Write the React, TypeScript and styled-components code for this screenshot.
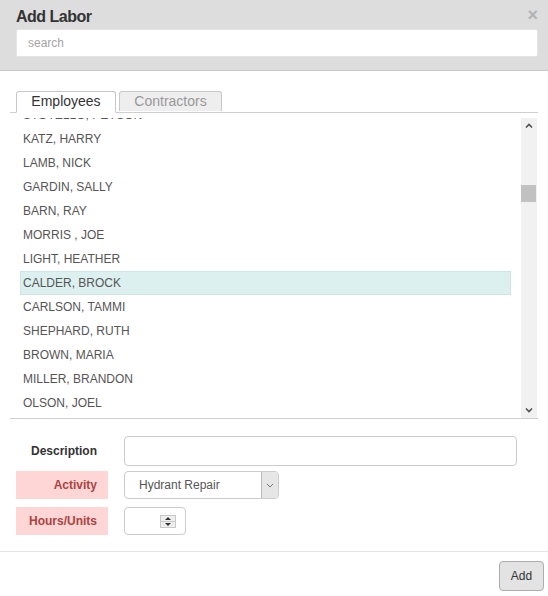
import React from "react";
import styled, { createGlobalStyle } from "styled-components";

const GlobalStyle = createGlobalStyle`
  html, body {
    margin: 0;
    padding: 0;
    background: #fff;
  }
  body {
    font-family: "Liberation Sans", Arial, sans-serif;
    color: #333;
  }
`;

const ROW_HEIGHT = 24;
const VIEWPORT_HEIGHT = 300;
const ARROW_SIZE = 16;

const visibleNames = [
  "STOTELLO, PEYSON",
  "KATZ, HARRY",
  "LAMB, NICK",
  "GARDIN, SALLY",
  "BARN, RAY",
  "MORRIS , JOE",
  "LIGHT, HEATHER",
  "CALDER, BROCK",
  "CARLSON, TAMMI",
  "SHEPHARD, RUTH",
  "BROWN, MARIA",
  "MILLER, BRANDON",
  "OLSON, JOEL",
  "PETERS, DANA",
];

const lastNames = [
  "ADAMS", "BAKER", "CLARK", "DAVIS", "EVANS", "FOSTER", "GRANT", "HAYES",
  "IVERSON", "JONES", "KELLER", "LARSON", "MASON", "NELSON", "OWENS", "PRICE",
  "QUINN", "REED", "STONE", "TURNER", "UNDERWOOD", "VANCE", "WALSH", "YOUNG",
];
const firstNames = [
  "AMY", "BEN", "CARL", "DIANE", "ERIC", "FRAN", "GARY", "HOLLY", "IAN",
  "JANE", "KYLE", "LISA", "MARK", "NORA", "OSCAR", "PAM", "RICK", "SUE",
];

const BEFORE = 40;
const TOTAL = 212;

const filler = (i: number) =>
  `${lastNames[(i * 7) % lastNames.length]}, ${firstNames[(i * 5) % firstNames.length]}`;

const employees: string[] = [
  ...Array.from({ length: BEFORE }, (_, i) => filler(i)),
  ...visibleNames,
  ...Array.from({ length: TOTAL - BEFORE - visibleNames.length }, (_, i) => filler(i + 100)),
];

const Modal = styled.div`
  width: 548px;
  height: 596px;
  background: #fff;
  display: flex;
  flex-direction: column;
  overflow: hidden;
`;

const Header = styled.div`
  background: #dddddd;
  border-bottom: 1px solid #c6c6c6;
  padding: 6px 10px 13px 16px;
  height: 71px;
  box-sizing: border-box;
`;

const TitleRow = styled.div`
  display: flex;
  align-items: flex-start;
  justify-content: space-between;
  height: 23px;
`;

const Title = styled.h4`
  margin: 0;
  font-size: 16px;
  font-weight: bold;
  letter-spacing: -0.5px;
  line-height: 22px;
  color: #333;
`;

const Close = styled.span`
  font-size: 18px;
  font-weight: bold;
  line-height: 18px;
  color: #b3b3b3;
`;

const SearchInput = styled.input`
  display: block;
  width: 522px;
  height: 28px;
  box-sizing: border-box;
  border: 1px solid #e4e4e4;
  border-radius: 2px;
  padding: 0 11px;
  font-family: "Liberation Sans", Arial, sans-serif;
  font-size: 12px;
  color: #555;
  background: #fff;
  outline: none;
  &::placeholder {
    color: #a5a5a5;
  }
`;

const Body = styled.div`
  padding: 20px 10px 0;
`;

const TabNav = styled.div`
  display: flex;
  gap: 3px;
  padding-left: 6px;
  border-bottom: 1px solid #cfcfcf;
  height: 21px;
`;

const Tab = styled.div<{ active?: boolean }>`
  width: ${p => (p.active ? 100 : 103)}px;
  height: ${p => (p.active ? 22 : 20)}px;
  box-sizing: border-box;
  border: 1px solid #c8c8c8;
  border-bottom: ${p => (p.active ? "1px solid #fff" : "none")};
  border-radius: 3px 3px 0 0;
  background: ${p => (p.active ? "#fff" : "#eeeeee")};
  color: ${p => (p.active ? "#333" : "#999")};
  font-size: 14px;
  line-height: 19px;
  text-align: center;
`;

const ListPanel = styled.div`
  display: flex;
  margin-top: 5px;
  border-bottom: 1px solid #cfcfcf;
  height: ${VIEWPORT_HEIGHT}px;
`;

const Viewport = styled.div`
  flex: 1;
  overflow: hidden;
  padding: 0 10px;
`;

const Rows = styled.div``;

const Row = styled.div<{ selected?: boolean }>`
  height: ${ROW_HEIGHT}px;
  box-sizing: border-box;
  line-height: 22px;
  padding-left: 2px;
  font-size: 12px;
  color: #555;
  white-space: nowrap;
  border: 1px solid ${p => (p.selected ? "#cfe5e5" : "transparent")};
  background: ${p => (p.selected ? "#ddf0f0" : "transparent")};
`;

const Scrollbar = styled.div`
  width: 16px;
  margin-right: 1px;
  background: #f1f1f1;
  display: flex;
  flex-direction: column;
`;

const ScrollArrow = styled.div`
  height: ${ARROW_SIZE}px;
  display: flex;
  align-items: center;
  justify-content: center;
`;

const ScrollTrack = styled.div`
  flex: 1;
`;

const Thumb = styled.div`
  background: #c1c1c1;
  margin-right: 1px;
`;

const Form = styled.div`
  padding: 17px 0 0 6px;
`;

const FormRow = styled.div<{ gap: number }>`
  display: flex;
  align-items: center;
  gap: 16px;
  margin-bottom: ${p => p.gap}px;
`;

const Label = styled.div<{ required?: boolean; tall?: boolean }>`
  width: 92px;
  height: ${p => (p.tall ? 30 : 28)}px;
  box-sizing: border-box;
  padding-right: 11px;
  display: flex;
  align-items: center;
  justify-content: flex-end;
  font-size: 12px;
  font-weight: bold;
  background: ${p => (p.required ? "#ffd6d6" : "transparent")};
  color: ${p => (p.required ? "#a94442" : "#333")};
`;

const TextInput = styled.input`
  width: 393px;
  height: 30px;
  box-sizing: border-box;
  border: 1px solid #ccc;
  border-radius: 4px;
  padding: 0 10px;
  font-size: 12px;
  background: #fff;
  outline: none;
`;

const SelectBox = styled.div`
  width: 155px;
  height: 28px;
  box-sizing: border-box;
  border: 1px solid #ccc;
  border-radius: 4px;
  display: flex;
  align-items: stretch;
  overflow: hidden;
`;

const SelectText = styled.div`
  flex: 1;
  padding-left: 14px;
  display: flex;
  align-items: center;
  font-size: 12px;
  color: #555;
`;

const SelectArrow = styled.div`
  width: 16px;
  background: #e6e6e6;
  border-left: 1px solid #b9b9b9;
  display: flex;
  align-items: center;
  justify-content: center;
`;

const NumberBox = styled.div`
  width: 62px;
  height: 28px;
  box-sizing: border-box;
  border: 1px solid #ccc;
  border-radius: 4px;
  display: flex;
  align-items: center;
  padding-left: 35px;
`;

const Footer = styled.div`
  margin-top: auto;
  border-top: 1px solid #e5e5e5;
  padding: 9px 4px 5px 0;
  display: flex;
  justify-content: flex-end;
`;

const AddButton = styled.button`
  width: 45px;
  height: 30px;
  border: 1px solid #adadad;
  border-radius: 4px;
  background: #e3e3e3;
  font-family: "Liberation Sans", Arial, sans-serif;
  font-size: 12px;
  color: #333;
  padding: 0;
`;

const Chevron = ({ up }: { up?: boolean }) => (
  <svg width="8" height="6" viewBox="0 0 8 6">
    <polyline
      points={up ? "1,4.5 4,1.5 7,4.5" : "1,1.5 4,4.5 7,1.5"}
      fill="none"
      stroke="#505050"
      strokeWidth="1.6"
    />
  </svg>
);

const Spinner = () => (
  <svg width="16" height="13" viewBox="0 0 16 13">
    <rect x="0.5" y="0.5" width="15" height="12" fill="#eee" stroke="#c8c8c8" />
    <line x1="1" y1="6.5" x2="15" y2="6.5" stroke="#c8c8c8" />
    <polygon points="5,5 8,2 11,5" fill="#333" />
    <polygon points="5,8 11,8 8,11" fill="#333" />
  </svg>
);

const SELECTED = "CALDER, BROCK";

const App: React.FunctionComponent = () => {
  // virtualised list: only the rows inside the viewport are rendered
  const scrollTop = BEFORE * ROW_HEIGHT + 15;
  const first = Math.floor(scrollTop / ROW_HEIGHT);
  const offset = scrollTop - first * ROW_HEIGHT;
  const count = Math.ceil((VIEWPORT_HEIGHT + offset) / ROW_HEIGHT);
  const windowRows = employees.slice(first, first + count);

  const contentHeight = employees.length * ROW_HEIGHT;
  const trackLen = VIEWPORT_HEIGHT - ARROW_SIZE * 2;
  const thumbHeight = Math.max(17, (trackLen * VIEWPORT_HEIGHT) / contentHeight);
  const thumbTop = ((trackLen - thumbHeight) * scrollTop) / (contentHeight - VIEWPORT_HEIGHT);

  return (
    <Modal>
      <GlobalStyle />
      <Header>
        <TitleRow>
          <Title>Add Labor</Title>
          <Close>×</Close>
        </TitleRow>
        <SearchInput placeholder="search" />
      </Header>
      <Body>
        <TabNav>
          <Tab active>Employees</Tab>
          <Tab>Contractors</Tab>
        </TabNav>
        <ListPanel>
          <Viewport>
            <Rows style={{ transform: `translateY(-${offset}px)` }}>
              {windowRows.map((name, index) => (
                <Row key={first + index} selected={name === SELECTED}>
                  {name}
                </Row>
              ))}
            </Rows>
          </Viewport>
          <Scrollbar>
            <ScrollArrow>
              <Chevron up />
            </ScrollArrow>
            <ScrollTrack>
              <Thumb style={{ marginTop: thumbTop, height: thumbHeight }} />
            </ScrollTrack>
            <ScrollArrow>
              <Chevron />
            </ScrollArrow>
          </Scrollbar>
        </ListPanel>
        <Form>
          <FormRow gap={5}>
            <Label tall>Description</Label>
            <TextInput />
          </FormRow>
          <FormRow gap={8}>
            <Label required>Activity</Label>
            <SelectBox>
              <SelectText>Hydrant Repair</SelectText>
              <SelectArrow>
                <svg width="8" height="5" viewBox="0 0 8 5">
                  <polyline points="1,1 4,4 7,1" fill="none" stroke="#777" strokeWidth="1" />
                </svg>
              </SelectArrow>
            </SelectBox>
          </FormRow>
          <FormRow gap={0}>
            <Label required>Hours/Units</Label>
            <NumberBox>
              <Spinner />
            </NumberBox>
          </FormRow>
        </Form>
      </Body>
      <Footer>
        <AddButton>Add</AddButton>
      </Footer>
    </Modal>
  );
};

export default App;
